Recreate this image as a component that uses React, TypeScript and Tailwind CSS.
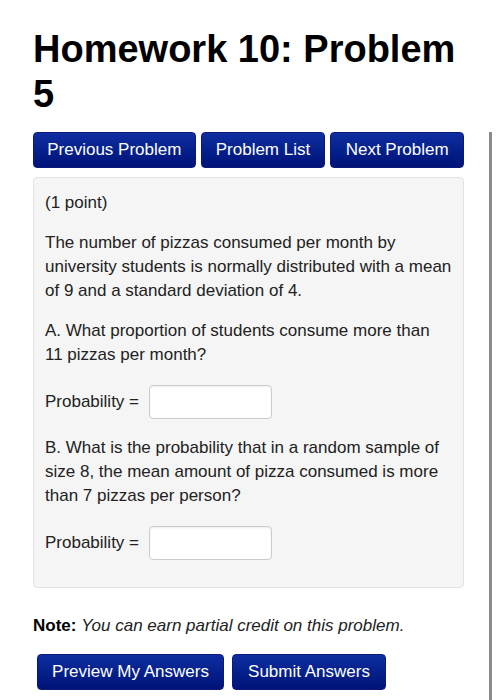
import React from 'react';

const font = { fontFamily: '"Liberation Sans", Arial, sans-serif' };

function NavButton({ label, className }: { label: string; className: string }) {
  return (
    <button
      className={`h-[36px] rounded-[4px] border border-[#0a1a7a] bg-gradient-to-b from-[#0f2ea0] to-[#001278] text-[17px] text-white ${className}`}
    >
      {label}
    </button>
  );
}

function AnswerRow() {
  return (
    <div className="flex items-center">
      <span>Probability =</span>
      <input
        type="text"
        className="ml-[10px] h-[34px] w-[123px] rounded-[4px] border border-[#cccccc] bg-white shadow-[inset_0_1px_2px_rgba(0,0,0,0.08)]"
      />
    </div>
  );
}

export default function App() {
  return (
    <div className="relative min-h-[700px] bg-white text-[#222]" style={font}>
      {/* scrollbar */}
      <div className="absolute left-[489px] top-[132px] h-[568px] w-[3px] bg-[#8a8a8a]" />

      <div className="w-[464px] pl-[33px]">
        <h1 className="pt-[27px] text-[38px] font-bold leading-[45px] text-black">
          Homework 10: Problem 5
        </h1>

        {/* Navigation */}
        <div className="mt-[15px] flex gap-[5px]">
          <NavButton label="Previous Problem" className="w-[163px]" />
          <NavButton label="Problem List" className="w-[125px]" />
          <NavButton label="Next Problem" className="w-[134px]" />
        </div>

        {/* Problem body */}
        <div className="mt-[9px] h-[411px] w-[431px] rounded-[4px] border border-[#e3e3e3] bg-[#f5f5f5] px-[11px] pt-[13px] text-[17px] leading-[24px]">
          <p>(1 point)</p>
          <p className="mt-[16px]">
            The number of pizzas consumed per month by university students is normally distributed with a mean of 9 and a
            standard deviation of 4.
          </p>
          <p className="mt-[16px]">A. What proportion of students consume more than 11&nbsp;pizzas per month?</p>
          <div className="mt-[18px]">
            <AnswerRow />
          </div>
          <p className="mt-[17px]">
            B. What is the probability that in a random sample of size 8, the mean amount of pizza consumed is more than 7
            pizzas per person?
          </p>
          <div className="mt-[18px]">
            <AnswerRow />
          </div>
        </div>

        <p className="mt-[26px] text-[17px] leading-[24px]">
          <b className="text-black">Note:</b> <i>You can earn partial credit on this problem.</i>
        </p>

        <div className="mt-[16px] flex gap-[8px] pl-[4px]">
          <NavButton label="Preview My Answers" className="w-[187px]" />
          <NavButton label="Submit Answers" className="w-[154px]" />
        </div>
      </div>
    </div>
  );
}
